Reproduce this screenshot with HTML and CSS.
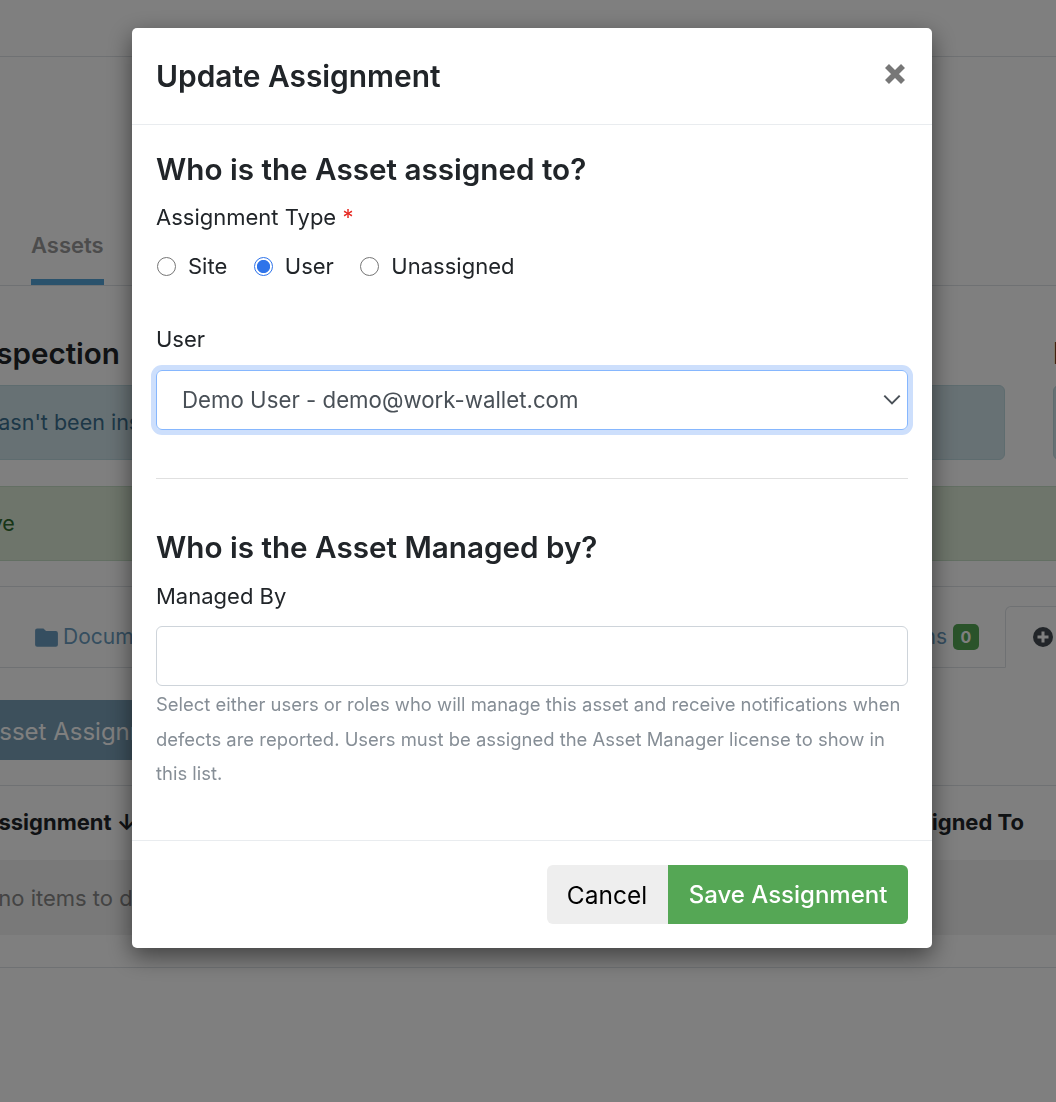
FILE: index.html
```html
<!DOCTYPE html>
<html lang="en">
<head>
<meta charset="utf-8">
<title>Update Assignment</title>
<link rel="stylesheet" href="styles.css">
</head>
<body>
<main class="page">
  <div class="topbar"></div>
  <nav class="main-tabs"><a class="main-tab">Assets</a></nav>
  <section class="cols">
    <div class="col-main">
      <h2 class="sec-title">Last Inspection</h2>
      <div class="alert alert-info">This asset hasn't been inspected yet</div>
    </div>
    <div class="col-side">
      <h2 class="sec-title side-title">Last Defect</h2>
      <div class="alert alert-info">None</div>
    </div>
  </section>
  <div class="alert alert-success status">This asset is currently active</div>
  <nav class="sub-tabs">
    <a class="sub-tab">
      <svg class="folder" viewBox="0 0 24 20" aria-hidden="true"><path d="M2.2 0.5h6.6l2.7 2.7h10.3a2.2 2.2 0 0 1 2.2 2.2v12.2a2.2 2.2 0 0 1-2.2 2.2H2.2A2.2 2.2 0 0 1 0 17.6V2.7A2.2 2.2 0 0 1 2.2.5z"/></svg>
      Documents
    </a>
    <a class="sub-tab sub-tab-end">Inspections <span class="badge">0</span></a>
    <a class="sub-tab sub-tab-active">
      <svg class="plus" viewBox="0 0 20 20" aria-hidden="true"><circle cx="10" cy="10" r="10"/><path d="M10 4.5v11M4.5 10h11"/></svg>
      Add
    </a>
  </nav>
  <div class="actions"><button class="add-btn">Add Asset Assignment</button></div>
  <div class="table-head"><span>Date of Assignment ↓</span><span>Assigned To</span></div>
  <div class="table-empty">There are no items to display</div>
</main>

<div class="overlay">
  <div class="modal">
    <header class="modal-header">
      <h1 class="modal-title">Update Assignment</h1>
      <svg class="close" viewBox="0 0 22 22" aria-hidden="true"><path d="M3 3l16 16M19 3L3 19"/></svg>
    </header>
    <div class="modal-body">
      <h2 class="group-title">Who is the Asset assigned to?</h2>
      <div class="label">Assignment Type <span class="req">*</span></div>
      <div class="radios">
        <label class="radio"><input type="radio" name="t"> Site</label>
        <label class="radio"><input type="radio" name="t" checked> User</label>
        <label class="radio"><input type="radio" name="t"> Unassigned</label>
      </div>
      <div class="label user-label">User</div>
      <div class="select">
        <span>Demo User - demo@work-wallet.com</span>
        <svg class="chevron" viewBox="0 0 16 10" aria-hidden="true"><path d="M1 1.5l7 7 7-7"/></svg>
      </div>
      <hr class="divider">
      <h2 class="group-title">Who is the Asset Managed by?</h2>
      <div class="label managed-label">Managed By</div>
      <div class="input"></div>
      <p class="help">Select either users or roles who will manage this asset and receive notifications when defects are reported. Users must be assigned the Asset Manager license to show in this list.</p>
    </div>
    <footer class="modal-footer">
      <button class="btn btn-cancel">Cancel</button>
      <button class="btn btn-save">Save Assignment</button>
    </footer>
  </div>
</div>
</body>
</html>
```
FILE: styles.css
```css
* { box-sizing: border-box; }
html, body { margin: 0; height: 100%; }
body {
  font-family: Inter, "Liberation Sans", sans-serif;
  color: #212529;
  background: #fff;
  overflow: hidden;
  height: 1102px;
}
.page { width: 1056px; height: 1102px; overflow: hidden; }
.topbar { height: 57px; border-bottom: 1px solid #dee2e6; }
.main-tabs { height: 229px; border-bottom: 1px solid #dee2e6; padding: 0 0 0 31px; display: flex; align-items: flex-end; }
.main-tab { display: block; height: 63px; font-size: 22px; font-weight: 600; line-height: 46px; color: #999; border-bottom: 6px solid #54a4d8; }
.cols { display: flex; gap: 48px; margin-left: -125px; width: 1500px; height: 174px; padding-top: 49px; }
.col-main { width: 1130px; flex: none; }
.col-side { width: 300px; flex: none; }
.sec-title { margin: 0 0 14px; font-size: 29.6px; line-height: 36px; font-weight: 600; color: #212529; }
.col-main .sec-title { padding-left: 27px; }
.alert { height: 75px; border: 1px solid; font-size: 21.5px; line-height: 73px; border-radius: 6px; padding: 0 25px; }
.col-main .alert { padding-left: 0; }
.alert-info { background: #cfe2e8; border-color: #bcd8df; color: #3a6f8f; }
.alert-success { background: #dcebd6; border-color: #c6dfc6; color: #2e6a2e; border-radius: 0; }
.status { margin-left: -301px; width: 1500px; margin-top: 26px; }
.sub-tabs { margin-top: 25px; border-top: 1px solid #dee2e6; padding-top: 19px; height: 82px; display: flex; position: relative; border-bottom: 1px solid #dee2e6; }
.sub-tab { font-size: 21px; line-height: 62px; color: #6a9cc0; display: flex; align-items: center; gap: 5px; white-space: nowrap; height: 62px; }
.sub-tab:first-child { margin-left: 35px; }
.sub-tab-end { margin-left: auto; margin-right: 26px; gap: 6px; }
.sub-tab-active { width: 100px; flex: none; margin-right: -49px; padding-left: 27px; border: 1px solid #dee2e6; border-bottom-color: #fff; border-radius: 6px 6px 0 0; background: #fff; color: #212529; font-weight: 500; }
.folder { width: 23px; height: 19px; fill: #6a9cc0; }
.plus { width: 20px; height: 20px; flex: none; }
.plus circle { fill: #454b52; }
.plus path { stroke: #fff; stroke-width: 3; fill: none; }
.badge { display: inline-block; background: #55a755; color: #fff; font-size: 16px; font-weight: 700; line-height: 26px; width: 26px; text-align: center; border-radius: 5px; }
.actions { padding: 32px 0 25px; margin-left: -91px; }
.add-btn { display: block; width: 400px; height: 60px; background: #7aa0b8; color: #fff; border: 0; border-radius: 6px; font: inherit; font-size: 24px; text-align: left; padding: 2px 0 0 21px; }
.table-head { border-top: 1px solid #dee2e6; height: 75px; display: flex; justify-content: space-between; align-items: center; font-size: 22px; font-weight: 700; padding: 0 32px 2px 0; margin-left: -100px; }
.table-head span:first-child { white-space: nowrap; }
.table-empty { height: 75px; background: #f2f2f2; font-size: 22px; line-height: 77px; color: #888; margin-left: -108px; }
.page::after { content: ""; display: block; margin-top: 32px; border-top: 1px solid #dee2e6; }

.overlay { position: fixed; inset: 0; background: rgba(0, 0, 0, .5); display: flex; justify-content: center; align-items: flex-start; padding: 28px 0 0 8px; }
.modal { width: 800px; height: 920px; background: #fff; border-radius: 5px; box-shadow: 0 8px 24px rgba(0, 0, 0, .5); display: flex; flex-direction: column; }
.modal-header { height: 97px; flex: none; border-bottom: 1px solid #e9ecef; padding: 0 26px 0 24px; display: flex; justify-content: space-between; align-items: flex-start; }
.modal-title { margin: 29px 0 0; font-size: 29.9px; line-height: 39px; font-weight: 600; }
.close { width: 22px; height: 22px; margin-top: 35px; fill: none; stroke: #777; stroke-width: 5.6; }
.modal-body { flex: 1; padding: 24px 24px 0; }
.group-title { margin: 0; font-size: 29.65px; line-height: 40px; font-weight: 600; }
.label { font-size: 22px; line-height: 30px; margin-top: 13px; }
.managed-label { margin-top: 14px; }
.req { color: #e6261f; }
.radios { display: flex; gap: 25.5px; margin-top: 19px; }
.radio { display: flex; align-items: center; gap: 12px; font-size: 22px; line-height: 30px; }
.radio input { appearance: none; margin: 0 0 0 1px; width: 19px; height: 19px; border: 1.5px solid #767676; border-radius: 50%; background: #fff; }
.radio input:checked { border: 1.5px solid #2f74ea; background: radial-gradient(circle, #2f74ea 0 6.2px, #fff 7px); }
.user-label { margin-top: 43px; }
.select { height: 60px; margin-top: 16px; border: 1px solid #86b7fe; border-radius: 6px; box-shadow: 0 0 0 5px #cddffc; display: flex; align-items: center; justify-content: space-between; padding: 0 6px 2px 25px; font-size: 22.25px; color: #495057; }
.chevron { width: 18px; height: 11px; fill: none; stroke: #495057; stroke-width: 1.8; }
.divider { border: 0; border-top: 1px solid #e0e0e0; margin: 48px 0 48px; }
.input { height: 60px; margin-top: 15px; border: 1px solid #ced4da; border-radius: 6px; }
.help { margin: 1px 0 0; font-size: 18.45px; line-height: 34.5px; color: #868e96; }
.modal-footer { height: 108px; flex: none; border-top: 1px solid #e9ecef; padding: 24px; display: flex; justify-content: flex-end; align-items: flex-start; }
.btn { height: 59px; border: 0; font: inherit; font-size: 24px; padding: 0; }
.btn-cancel { width: 121px; background: #eee; color: #000; border-radius: 6px 0 0 6px; font-size: 24.5px; padding-right: 1px; }
.btn-save { width: 240px; background: #55a755; color: #fff; border-radius: 0 6px 6px 0; font-weight: 500; }
```
